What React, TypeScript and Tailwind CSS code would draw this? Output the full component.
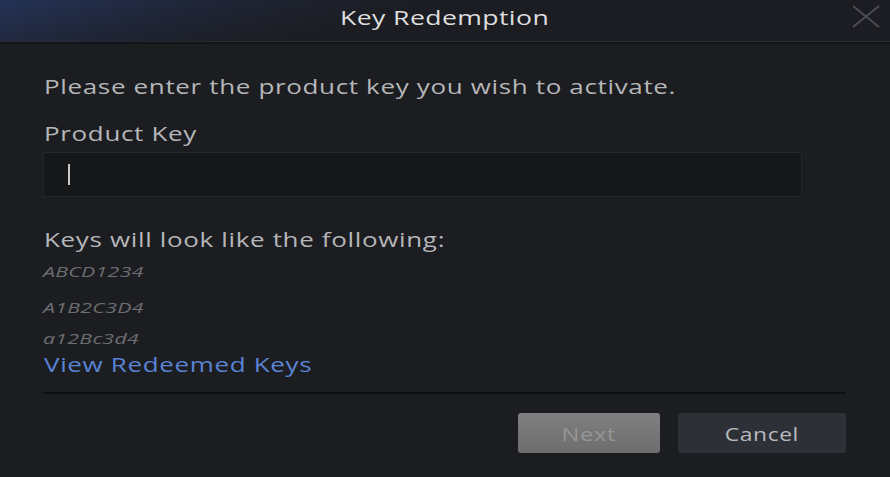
import React from "react";

export default function App() {
  const font = { fontFamily: '"Open Sans", "Noto Sans", sans-serif' };
  return (
    <div className="w-[890px] h-[477px] bg-[#1c1d21] overflow-hidden flex flex-col" style={font}>
      <div className="relative h-[41px] shrink-0 bg-[linear-gradient(165deg,#243256_0%,#1f2638_20%,#1c1d22_42%,#1c1d22_100%)] flex items-center justify-center">
        <span className="inline-block -mt-[6px] text-[20px] leading-[26px] text-[#dcdedf] tracking-[0.3px] origin-center scale-x-[1.33]">
          Key Redemption
        </span>
        <svg className="absolute left-[852px] top-[5px]" width="28" height="23" viewBox="0 0 28 23">
          <path d="M1 1 L27 22 M27 1 L1 22" stroke="#4b4c52" strokeWidth="2" fill="none" />
        </svg>
      </div>
      <div className="h-[1px] bg-[#292b33]" />
      <div className="h-[2px] bg-[#131417]" />
      <div className="flex flex-col pl-[43px] pr-[44px]">
        <div className="mt-[30px] text-[20px] leading-[26px] text-[#b5b6b9] tracking-[0.5px] pl-[1px]">
          <span className="inline-block origin-left scale-x-[1.3]">Please enter the product key you wish to activate.</span>
        </div>
        <div className="mt-[21px] text-[20px] leading-[26px] text-[#b5b6b9] tracking-[0.5px] pl-[1px]">
          <span className="inline-block origin-left scale-x-[1.3]">Product Key</span>
        </div>
        <div className="mt-[5px] w-[759px] h-[45px] bg-[#161719] border border-[#25262a] flex items-center pl-[24px]">
          <div className="w-[2px] h-[21px] bg-[#c9c9c9]" />
        </div>
        <div className="mt-[30px] text-[20px] leading-[26px] text-[#b5b6b9] tracking-[0.5px] pl-[1px]">
          <span className="inline-block origin-left scale-x-[1.3]">Keys will look like the following:</span>
        </div>
        <div className="mt-[9px] text-[15px] leading-[18px] italic text-[#6c6d71] tracking-[0.2px]">
          <span className="inline-block origin-left scale-x-[1.42]">ABCD1234</span>
        </div>
        <div className="mt-[18px] text-[15px] leading-[18px] italic text-[#6c6d71] tracking-[0.2px]">
          <span className="inline-block origin-left scale-x-[1.42]">A1B2C3D4</span>
        </div>
        <div className="mt-[13px] text-[15px] leading-[18px] italic text-[#6c6d71] tracking-[0.2px]">
          <span className="inline-block origin-left scale-x-[1.42]">a12Bc3d4</span>
        </div>
        <div className="mt-[5px] text-[20px] leading-[26px] text-[#5a83d3] tracking-[0.5px] pl-[1px]">
          <span className="inline-block origin-left scale-x-[1.3]">View Redeemed Keys</span>
        </div>
        <div className="mt-[14px] h-[2px] bg-[#0e0f11] w-[803px]" />
        <div className="mt-[19px] flex justify-end gap-[18px] w-[803px]">
          <div className="w-[142px] h-[40px] pt-[3px] rounded-[3px] bg-[linear-gradient(180deg,#808080,#6d6d6d)] flex items-center justify-center text-[19px] text-[#959595] tracking-[0.5px]">
            <span className="inline-block origin-center scale-x-[1.25]">Next</span>
          </div>
          <div className="w-[168px] h-[40px] pt-[3px] rounded-[3px] bg-[#2e3038] flex items-center justify-center text-[19px] text-[#b8babe] tracking-[0.5px]">
            <span className="inline-block origin-center scale-x-[1.2]">Cancel</span>
          </div>
        </div>
      </div>
    </div>
  );
}
